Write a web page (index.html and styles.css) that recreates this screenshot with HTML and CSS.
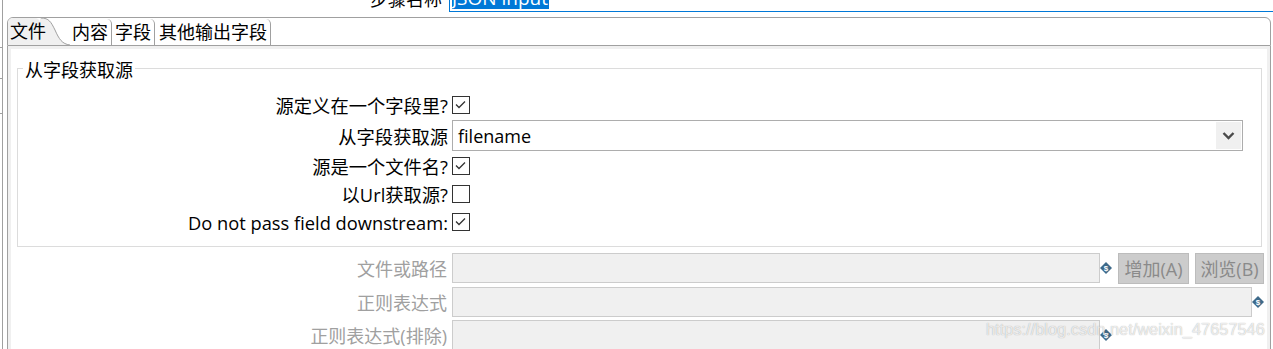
FILE: index.html
```html
<!DOCTYPE html>
<html lang="zh-CN">
<head>
    <meta charset="UTF-8">
    <meta name="viewport" content="width=device-width, initial-scale=1.0">
    <title>JSON input</title>
    <link rel="stylesheet" href="styles.css">
</head>
<body>

<div class="window">
    <div class="sash">
        <i class="tick t1"></i>
        <i class="tick t2"></i>
        <i class="tick t3"></i>
    </div>

    <div class="main">
        <div class="step-row">
            <label class="step-label">步骤名称</label>
            <div class="step-input"><span class="selected">JSON input</span></div>
        </div>

        <div class="tab-folder">
            <div class="tab-header">
                <div class="tab active"><span>文件</span></div>
                <svg class="tab-curve" width="30" height="27" viewBox="0 0 30 27">
                    <path d="M0 0 H1 C9 0 11 4 15 12 C19 21 22 26 30 27 H0 Z" fill="#f0f0f0"/>
                    <path d="M1 0 C9 0 11 4 15 12 C19 21 22 26 30 27" fill="none" stroke="#a0a0a0" stroke-width="1"/>
                </svg>
                <div class="tab first">内容</div>
                <div class="tab">字段</div>
                <div class="tab last">其他输出字段</div>
            </div>

            <div class="tab-body">
                <div class="tab-inner">
                    <fieldset class="group">
                        <legend>从字段获取源</legend>

                        <div class="row">
                            <span class="label">源定义在一个字段里?</span>
                            <span class="check">
                                <svg width="17" height="17" viewBox="0 0 17 17"><path d="M4 8.5 L7 11.5 L13 5.5" fill="none" stroke="#333" stroke-width="1.3"/></svg>
                            </span>
                        </div>

                        <div class="row combo-row">
                            <span class="label">从字段获取源</span>
                            <div class="combo">
                                <span class="combo-text">filename</span>
                                <span class="combo-btn">
                                    <svg width="13" height="9" viewBox="0 0 13 9"><path d="M1.5 2 L6.5 7 L11.5 2" fill="none" stroke="#4a4a4a" stroke-width="2.4"/></svg>
                                </span>
                            </div>
                        </div>

                        <div class="row">
                            <span class="label">源是一个文件名?</span>
                            <span class="check">
                                <svg width="17" height="17" viewBox="0 0 17 17"><path d="M4 8.5 L7 11.5 L13 5.5" fill="none" stroke="#333" stroke-width="1.3"/></svg>
                            </span>
                        </div>

                        <div class="row">
                            <span class="label">以Url获取源?</span>
                            <span class="check"></span>
                        </div>

                        <div class="row">
                            <span class="label">Do not pass field downstream:</span>
                            <span class="check">
                                <svg width="17" height="17" viewBox="0 0 17 17"><path d="M4 8.5 L7 11.5 L13 5.5" fill="none" stroke="#333" stroke-width="1.3"/></svg>
                            </span>
                        </div>
                    </fieldset>

                    <div class="file-rows">
                        <div class="file-row">
                            <span class="label disabled">文件或路径</span>
                            <div class="text-field short"></div>
                            <span class="var-icon">
                                <svg width="12" height="12" viewBox="0 0 12 12"><polygon points="6,0 12,6 6,12 0,6" fill="#3e6a8a"/><text x="6" y="9" font-size="8" font-family="Liberation Sans, sans-serif" font-weight="bold" fill="#fff" text-anchor="middle">$</text></svg>
                            </span>
                            <button class="btn" disabled>增加(A)</button>
                            <button class="btn browse" disabled>浏览(B)</button>
                        </div>
                        <div class="file-row mid">
                            <span class="label disabled">正则表达式</span>
                            <div class="text-field long"></div>
                            <span class="var-icon">
                                <svg width="12" height="12" viewBox="0 0 12 12"><polygon points="6,0 12,6 6,12 0,6" fill="#3e6a8a"/><text x="6" y="9" font-size="8" font-family="Liberation Sans, sans-serif" font-weight="bold" fill="#fff" text-anchor="middle">$</text></svg>
                            </span>
                        </div>
                        <div class="file-row">
                            <span class="label disabled">正则表达式(排除)</span>
                            <div class="text-field short"></div>
                            <span class="var-icon">
                                <svg width="12" height="12" viewBox="0 0 12 12"><polygon points="6,0 12,6 6,12 0,6" fill="#3e6a8a"/><text x="6" y="9" font-size="8" font-family="Liberation Sans, sans-serif" font-weight="bold" fill="#fff" text-anchor="middle">$</text></svg>
                            </span>
                        </div>
                    </div>
                </div>
            </div>
        </div>
    </div>

    <div class="watermark">https://blog.csdn.net/weixin_47657546</div>
</div>

</body>
</html>
```

FILE: styles.css
```css
body {
    margin: 0;
    background-color: #fff;
    color: #000;
    font-family: 'Open Sans', 'Noto Sans CJK SC', sans-serif;
    font-size: 18px;
    overflow: hidden;
}

.window {
    position: relative;
    display: flex;
    height: 349px;
    overflow: hidden;
}

/* left sash */
.sash {
    width: 2px;
    flex: none;
    border-right: 1px solid #a0a0a0;
    display: flex;
    flex-direction: column;
}

.tick {
    display: block;
    width: 2px;
    height: 1px;
    background-color: #a0a0a0;
}

.t1 { margin-top: 47px; }
.t2 { margin-top: 30px; }
.t3 { margin-top: 34px; }

.main {
    flex: 1;
    min-width: 0;
    margin-left: 4px;
    margin-right: 2px;
}

/* step name row, scrolled partly out of view */
.step-row {
    display: flex;
    align-items: center;
    height: 28px;
    margin-top: -16px;
}

.step-label {
    width: 435px;
    margin-right: 7px;
    text-align: right;
}

.step-input {
    flex: 1;
    height: 26px;
    margin-right: -6px;
    border: 1px solid #0078d7;
    display: flex;
    align-items: center;
    padding-left: 2px;
}

.selected {
    background-color: #0078d7;
    color: #fff;
    font-size: 19px;
    line-height: 22px;
    padding-right: 1px;
}

/* tab folder */
.tab-folder {
    margin-top: 5px;
}

.tab-header {
    display: flex;
    height: 27px;
    border: 1px solid #a0a0a0;
    border-radius: 6px 6px 0 0;
    line-height: 27px;
}

.tab {
    height: 26px;
    margin-top: 1px;
    line-height: 26px;
    padding: 0 3px;
    border-right: 1px solid #a0a0a0;
    border-top-right-radius: 5px;
    white-space: nowrap;
}

.tab.active {
    width: 30px;
    margin-top: 0;
    height: 27px;
    line-height: 27px;
    padding: 0 0 0 2px;
    border-right: none;
    border-top-left-radius: 5px;
    background-color: #f0f0f0;
    position: relative;
    z-index: 1;
}

.tab-curve {
    flex: none;
    display: block;
}

.tab.first {
    padding-left: 2px;
}

.tab.last {
    padding-left: 4px;
}

.tab-body {
    border-left: 1px solid #a0a0a0;
    border-right: 1px solid #a0a0a0;
    background-color: #f0f0f0;
    padding: 3px 3px 0 3px;
    height: 320px;
}

.tab-inner {
    background-color: #fff;
    height: 100%;
    padding-top: 7px;
    box-sizing: border-box;
}

/* group */
.group {
    margin: 0 5px 0 6px;
    padding: 11px 0 10px 0;
    border: 1px solid #dcdcdc;
    min-width: 0;
}

.group legend {
    margin-left: 5px;
    padding: 4px 2px 0 2px;
    line-height: 20px;
}

.row {
    display: flex;
    align-items: center;
    height: 28px;
}

.row.combo-row {
    height: 33px;
}

.label {
    width: 430px;
    margin-right: 4px;
    text-align: right;
    white-space: nowrap;
    flex: none;
}

.row .label {
    font-size: 18.3px;
}

.check {
    width: 16px;
    height: 16px;
    border: 1px solid #333;
    background-color: #fff;
    position: relative;
    flex: none;
}

.check svg {
    position: absolute;
    left: -1px;
    top: -1px;
}

.combo {
    width: 789px;
    height: 29px;
    border: 1px solid #adadad;
    display: flex;
    align-items: center;
    justify-content: space-between;
}

.combo-text {
    padding-left: 5px;
}

.combo-btn {
    width: 25px;
    height: 27px;
    margin-right: 1px;
    background-color: #f0f0f0;
    display: flex;
    align-items: center;
    justify-content: center;
}

/* file rows (disabled) */
.file-rows {
    margin-top: 4px;
}

.file-row {
    display: flex;
    align-items: center;
    height: 34px;
}

.file-row.mid {
    height: 33px;
}

.file-row .label {
    width: 436px;
    margin-right: 5px;
}

.label.disabled {
    color: #a0a0a0;
}

.text-field {
    height: 28px;
    border: 1px solid #cccccc;
    background-color: #f0f0f0;
    flex: none;
}

.text-field.short {
    width: 646px;
}

.text-field.long {
    width: 798px;
}

.var-icon {
    width: 18px;
    flex: none;
    display: flex;
    align-items: center;
}

.var-icon svg {
    display: block;
}

.btn {
    height: 31px;
    width: 71px;
    padding: 0;
    border: 1px solid #bcbcbc;
    background-color: #cccccc;
    color: #8a8a8a;
    font-family: 'Open Sans', 'Noto Sans CJK SC', sans-serif;
    font-size: 18px;
}

.btn.browse {
    width: 69px;
    margin-left: 6px;
}

.watermark {
    position: absolute;
    left: 986px;
    top: 320px;
    font-family: 'Liberation Sans', Arial, sans-serif;
    font-size: 16.4px;
    color: rgba(255, 255, 255, 0.75);
    text-shadow: 0 0 1px rgba(0, 0, 0, 0.35);
    white-space: nowrap;
}
```
